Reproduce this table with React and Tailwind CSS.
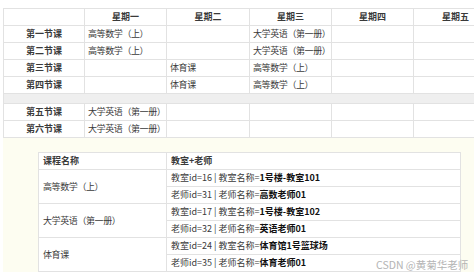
import React from 'react'

const days = ['星期一', '星期二', '星期三', '星期四', '星期五']

const lessons = [
  { name: '第一节课', cells: ['高等数学（上）', '', '大学英语（第一册）', '', ''] },
  { name: '第二节课', cells: ['高等数学（上）', '', '大学英语（第一册）', '', ''] },
  { name: '第三节课', cells: ['', '体育课', '高等数学（上）', '', ''] },
  { name: '第四节课', cells: ['', '体育课', '高等数学（上）', '', ''] },
  null,
  { name: '第五节课', cells: ['大学英语（第一册）', '', '', '', ''] },
  { name: '第六节课', cells: ['大学英语（第一册）', '', '', '', ''] },
]

const courses = [
  {
    name: '高等数学（上）',
    lines: [
      ['教室id=16 | 教室名称=', '1号楼-教室101'],
      ['老师id=31 | 老师名称=', '高数老师01'],
    ],
  },
  {
    name: '大学英语（第一册）',
    lines: [
      ['教室id=17 | 教室名称=', '1号楼-教室102'],
      ['老师id=32 | 老师名称=', '英语老师01'],
    ],
  },
  {
    name: '体育课',
    lines: [
      ['教室id=24 | 教室名称=', '体育馆1号篮球场'],
      ['老师id=35 | 老师名称=', '体育老师01'],
    ],
  },
]

const cell = 'border border-[#e2e2e2] h-[17px] p-0 leading-[16px] whitespace-nowrap'

export default function App() {
  return (
    <div className="relative w-[474px] h-[275px] overflow-hidden bg-white text-[9px] text-[#3a3a3a] font-['Noto_Sans_CJK_SC','Noto_Sans',sans-serif]">
      <div className="pt-[8px] pl-[3px] w-[600px]">
        {/* weekly timetable */}
        <table className="table-fixed border-collapse w-[494px]">
          <colgroup>
            <col className="w-[81px]" />
            <col className="w-[82px]" />
            <col className="w-[83px]" />
            <col className="w-[82px]" />
            <col className="w-[82px]" />
            <col className="w-[84px]" />
          </colgroup>
          <thead>
            <tr>
              <th className={cell}></th>
              {days.map((d) => (
                <th key={d} className={`${cell} font-bold text-center`}>{d}</th>
              ))}
            </tr>
          </thead>
          <tbody>
            {lessons.map((row, i) =>
              row ? (
                <tr key={i}>
                  <td className={`${cell} font-bold text-center`}>{row.name}</td>
                  {row.cells.map((c, j) => (
                    <td key={j} className={`${cell} pl-[3px] tracking-[-0.4px]`}>{c}</td>
                  ))}
                </tr>
              ) : (
                <tr key={i}>
                  <td colSpan={6} className="border border-[#e2e2e2] h-[10px] p-0 bg-[#efefef]"></td>
                </tr>
              )
            )}
          </tbody>
        </table>

        {/* course detail */}
        <div className="w-[494px] h-[134px] bg-[#fdfdf1] pt-[14px] pl-[35px]">
          <table className="table-fixed border-collapse bg-white w-[422px]">
            <colgroup>
              <col className="w-[128px]" />
              <col className="w-[294px]" />
            </colgroup>
            <thead>
              <tr>
                <th className={`${cell} text-left font-bold pl-[4px]`}>课程名称</th>
                <th className={`${cell} text-left font-bold pl-[4px]`}>教室+老师</th>
              </tr>
            </thead>
            <tbody>
              {courses.map((c) =>
                c.lines.map((l, k) => (
                  <tr key={c.name + k}>
                    {k === 0 && (
                      <td rowSpan={2} className={`${cell} pl-[4px] align-middle tracking-[-0.4px]`}>{c.name}</td>
                    )}
                    <td className={`${cell} pl-[4px]`}>
                      {l[0]}
                      <span className="font-bold text-[#111]">{l[1]}</span>
                    </td>
                  </tr>
                ))
              )}
            </tbody>
          </table>
        </div>
      </div>

      <div className="absolute left-[376px] top-[259px] text-[10.5px] leading-[12px] text-[#b4b4b4] whitespace-nowrap">
        CSDN @黄菊华老师
      </div>
    </div>
  )
}
